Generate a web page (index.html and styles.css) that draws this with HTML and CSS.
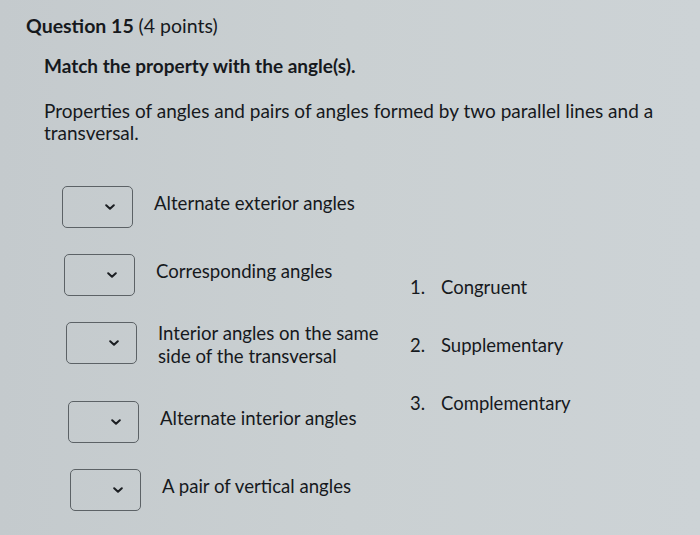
FILE: index.html
```html
<!DOCTYPE html>
<html>
<head>
<meta charset="utf-8">
<link rel="stylesheet" href="styles.css">
</head>
<body>
<div class="page">
  <h1 class="q-title">Question 15 <span class="pts">(4 points)</span></h1>
  <p class="prompt">Match the property with the angle(s).</p>
  <p class="desc">Properties of angles and pairs of angles formed by two parallel lines and a transversal.</p>
  <div class="match">
    <div class="left">
      <div class="row r1">
        <div class="select"><svg class="chev" viewBox="0 0 10 6" width="10" height="6"><path d="M1.2 1.2 L5 4.8 L8.8 1.2" fill="none" stroke="#1b1e22" stroke-width="2" stroke-linecap="round" stroke-linejoin="round"/></svg></div>
        <div class="label">Alternate exterior angles</div>
      </div>
      <div class="row r2">
        <div class="select"><svg class="chev" viewBox="0 0 10 6" width="10" height="6"><path d="M1.2 1.2 L5 4.8 L8.8 1.2" fill="none" stroke="#1b1e22" stroke-width="2" stroke-linecap="round" stroke-linejoin="round"/></svg></div>
        <div class="label">Corresponding angles</div>
      </div>
      <div class="row r3">
        <div class="select"><svg class="chev" viewBox="0 0 10 6" width="10" height="6"><path d="M1.2 1.2 L5 4.8 L8.8 1.2" fill="none" stroke="#1b1e22" stroke-width="2" stroke-linecap="round" stroke-linejoin="round"/></svg></div>
        <div class="label two">Interior angles on the same<br>side of the transversal</div>
      </div>
      <div class="row r4">
        <div class="select"><svg class="chev" viewBox="0 0 10 6" width="10" height="6"><path d="M1.2 1.2 L5 4.8 L8.8 1.2" fill="none" stroke="#1b1e22" stroke-width="2" stroke-linecap="round" stroke-linejoin="round"/></svg></div>
        <div class="label">Alternate interior angles</div>
      </div>
      <div class="row r5">
        <div class="select"><svg class="chev" viewBox="0 0 10 6" width="10" height="6"><path d="M1.2 1.2 L5 4.8 L8.8 1.2" fill="none" stroke="#1b1e22" stroke-width="2" stroke-linecap="round" stroke-linejoin="round"/></svg></div>
        <div class="label">A pair of vertical angles</div>
      </div>
    </div>
    <ol class="answers">
      <li><span class="num">1.</span><span>Congruent</span></li>
      <li><span class="num">2.</span><span>Supplementary</span></li>
      <li><span class="num">3.</span><span>Complementary</span></li>
    </ol>
  </div>
</div>
</body>
</html>
```

FILE: styles.css
```css
html, body {
  margin: 0;
  padding: 0;
}
body {
  width: 700px;
  height: 535px;
  overflow: hidden;
  background: linear-gradient(90deg, #c4cacd 0%, #cad0d2 50%, #cdd3d6 100%);
  font-family: Lato, "Open Sans", sans-serif;
  color: #16191d;
}
.page {
  padding: 14px 0 0 26px;
}
.q-title {
  margin: 0;
  font-size: 19.5px;
  font-weight: 700;
  line-height: 24px;
}
.q-title .pts {
  font-weight: 400;
}
.prompt {
  margin: 16px 0 0 18px;
  font-size: 19px;
  font-weight: 700;
  line-height: 24px;
}
.desc {
  margin: 22px 0 0 18px;
  width: 640px;
  font-size: 19px;
  line-height: 22px;
}
.match {
  display: flex;
  margin-top: 42px;
}
.left {
  display: flex;
  flex-direction: column;
  gap: 26px;
  width: 384px;
}
.row {
  display: flex;
  align-items: flex-start;
  gap: 21px;
}
.r1 { margin-left: 36px; }
.r2 { margin-left: 38px; }
.r3 { margin-left: 40px; }
.r4 { margin-left: 42px; margin-top: 7px; }
.r5 { margin-left: 44px; }
.select {
  flex: none;
  width: 71px;
  height: 42px;
  border: 1.2px solid #5c6266;
  border-radius: 5px;
  display: flex;
  align-items: center;
  justify-content: flex-end;
  padding-right: 17px;
  box-sizing: border-box;
}
.label {
  font-size: 18.6px;
  line-height: 23px;
  padding-top: 6px;
}
.r3 .label { padding-top: 0; }
.answers {
  list-style: none;
  margin: 90px 0 0 0;
  padding: 0;
  display: flex;
  flex-direction: column;
  gap: 35px;
}
.answers li {
  display: flex;
  font-size: 18.5px;
  line-height: 23px;
}
.answers .num {
  width: 31px;
}
```
